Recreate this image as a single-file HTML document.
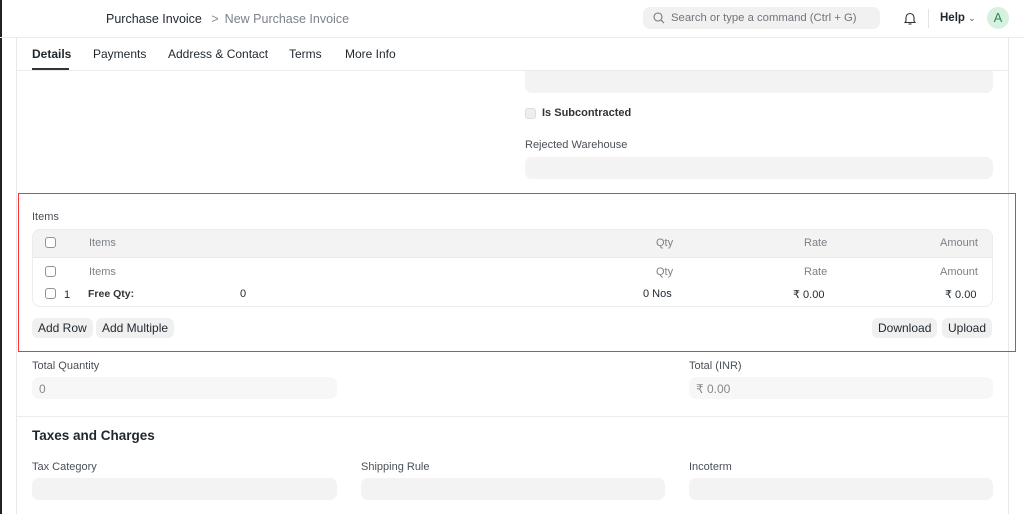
<!DOCTYPE html>
<html><head><meta charset="utf-8"><style>
*{box-sizing:border-box;margin:0;padding:0}
body{width:1024px;height:514px;overflow:hidden;background:#fff;font-family:"Liberation Sans",Arial,sans-serif;color:#1f272e;position:relative;font-size:13px}
.a{position:absolute}
.lbl{font-size:11px;color:#4a5058}
.inp{background:#f3f3f3;border-radius:7px;height:22px}
.btn{background:#f0f0f0;border-radius:6px;height:20px;font-size:12px;line-height:20px;padding:0 6px;color:#1f272e}
.cb{width:11px;height:11px;border:1px solid #8d949a;border-radius:3px;background:#fff}
.th{font-size:11px;color:#7c8288}
</style></head><body>
<div class="a" style="left:0;top:0;width:2px;height:514px;background:#222"></div>
<div class="a" style="left:0;top:37px;width:1024px;height:1px;background:#ebebeb"></div>
<div class="a" style="left:16px;top:38px;width:1px;height:476px;background:#e8e8e8"></div>
<div class="a" style="left:1008px;top:38px;width:1px;height:476px;background:#e8e8e8"></div>
<div class="a" style="left:106px;top:12px;font-size:12.5px">Purchase Invoice <span style="color:#888;margin:0 6px">&gt;</span><span style="color:#7c8288">New Purchase Invoice</span></div>
<div class="a" style="left:643px;top:7px;width:237px;height:22px;background:#f1f1f1;border-radius:7px"></div>
<svg class="a" style="left:653px;top:12px" width="12" height="12" viewBox="0 0 12 12"><circle cx="5" cy="5" r="4" fill="none" stroke="#777" stroke-width="1.1"/><path d="M8 8l3 3" stroke="#777" stroke-width="1.1"/></svg>
<div class="a" style="left:671px;top:12px;font-size:11.3px;color:#6f757b">Search or type a command (Ctrl + G)</div>
<svg class="a" style="left:903px;top:11px" width="14" height="15" viewBox="0 0 14 15"><path d="M3 10V6.5a4 4 0 018 0V10l1 1.5H2z" fill="none" stroke="#333" stroke-width="1.1"/><path d="M5.5 13h3" stroke="#333" stroke-width="1.1"/></svg>
<div class="a" style="left:928px;top:9px;width:1px;height:19px;background:#e3e3e3"></div>
<div class="a" style="left:940px;top:12px;font-size:11.5px;font-weight:bold">Help <span style="font-weight:normal;color:#555;font-size:9px">&#8964;</span></div>
<div class="a" style="left:987px;top:7px;width:22px;height:22px;border-radius:50%;background:#d7f0e0;color:#2d8a52;font-size:13px;text-align:center;line-height:22px">A</div>
<div class="a" style="left:17px;top:70px;width:991px;height:1px;background:#ececec"></div>
<div class="a" style="left:32px;top:47px;font-size:12px;font-weight:bold">Details</div>
<div class="a" style="left:32px;top:68px;width:37px;height:2px;background:#333"></div>
<div class="a" style="left:93px;top:47px;font-size:12px">Payments</div>
<div class="a" style="left:168px;top:47px;font-size:12px">Address &amp; Contact</div>
<div class="a" style="left:289px;top:47px;font-size:12px">Terms</div>
<div class="a" style="left:345px;top:47px;font-size:12px">More Info</div>
<div class="a inp" style="left:525px;top:71px;width:468px;height:22px;border-radius:0 0 7px 7px"></div>
<div class="a" style="left:525px;top:108px;width:11px;height:11px;border-radius:3px;background:#eee;border:1px solid #ddd"></div>
<div class="a" style="left:542px;top:107px;font-size:11px;font-weight:bold;color:#333">Is Subcontracted</div>
<div class="a lbl" style="left:525px;top:139px">Rejected Warehouse</div>
<div class="a inp" style="left:525px;top:157px;width:468px"></div>
<div class="a" style="left:18px;top:193px;width:998px;height:159px;border:1.5px solid #f33"></div>
<div class="a lbl" style="left:32px;top:211px">Items</div>
<div class="a" style="left:32px;top:229px;width:961px;height:78px;border:1px solid #ececec;border-radius:8px;overflow:hidden">
 <div style="height:28px;background:#f3f3f3;border-bottom:1px solid #e8e8e8"></div>
</div>
<div class="a cb" style="left:45px;top:237px"></div>
<div class="a th" style="left:89px;top:237px">Items</div>
<div class="a th" style="left:656px;top:237px">Qty</div>
<div class="a th" style="left:804px;top:237px">Rate</div>
<div class="a th" style="left:940px;top:237px">Amount</div>
<div class="a cb" style="left:45px;top:266px"></div>
<div class="a th" style="left:89px;top:266px">Items</div>
<div class="a th" style="left:656px;top:266px">Qty</div>
<div class="a th" style="left:804px;top:266px">Rate</div>
<div class="a th" style="left:940px;top:266px">Amount</div>
<div class="a cb" style="left:45px;top:288px"></div>
<div class="a" style="left:64px;top:289px;font-size:11px">1</div>
<div class="a" style="left:88px;top:288px;font-size:10.5px;font-weight:bold;color:#333">Free Qty:</div>
<div class="a" style="left:240px;top:288px;font-size:11px">0</div>
<div class="a" style="left:643px;top:288px;font-size:11px">0 Nos</div>
<div class="a" style="left:793px;top:288px;font-size:11px">₹ 0.00</div>
<div class="a" style="left:945px;top:288px;font-size:11px">₹ 0.00</div>
<div class="a btn" style="left:32px;top:318px">Add Row</div>
<div class="a btn" style="left:96px;top:318px">Add Multiple</div>
<div class="a btn" style="left:872px;top:318px">Download</div>
<div class="a btn" style="left:942px;top:318px">Upload</div>
<div class="a lbl" style="left:32px;top:360px">Total Quantity</div>
<div class="a inp" style="left:32px;top:377px;width:305px;background:#f7f7f7;font-size:12px;color:#888;padding:5px 7px">0</div>
<div class="a lbl" style="left:689px;top:360px">Total (INR)</div>
<div class="a inp" style="left:689px;top:377px;width:304px;background:#f7f7f7;font-size:12px;color:#888;padding:5px 7px">₹ 0.00</div>
<div class="a" style="left:17px;top:416px;width:991px;height:1px;background:#ececec"></div>
<div class="a" style="left:32px;top:428px;font-size:13.5px;font-weight:bold;color:#1f272e">Taxes and Charges</div>
<div class="a lbl" style="left:32px;top:461px">Tax Category</div>
<div class="a inp" style="left:32px;top:478px;width:305px"></div>
<div class="a lbl" style="left:361px;top:461px">Shipping Rule</div>
<div class="a inp" style="left:361px;top:478px;width:304px"></div>
<div class="a lbl" style="left:689px;top:461px">Incoterm</div>
<div class="a inp" style="left:689px;top:478px;width:304px"></div>
</body></html>
